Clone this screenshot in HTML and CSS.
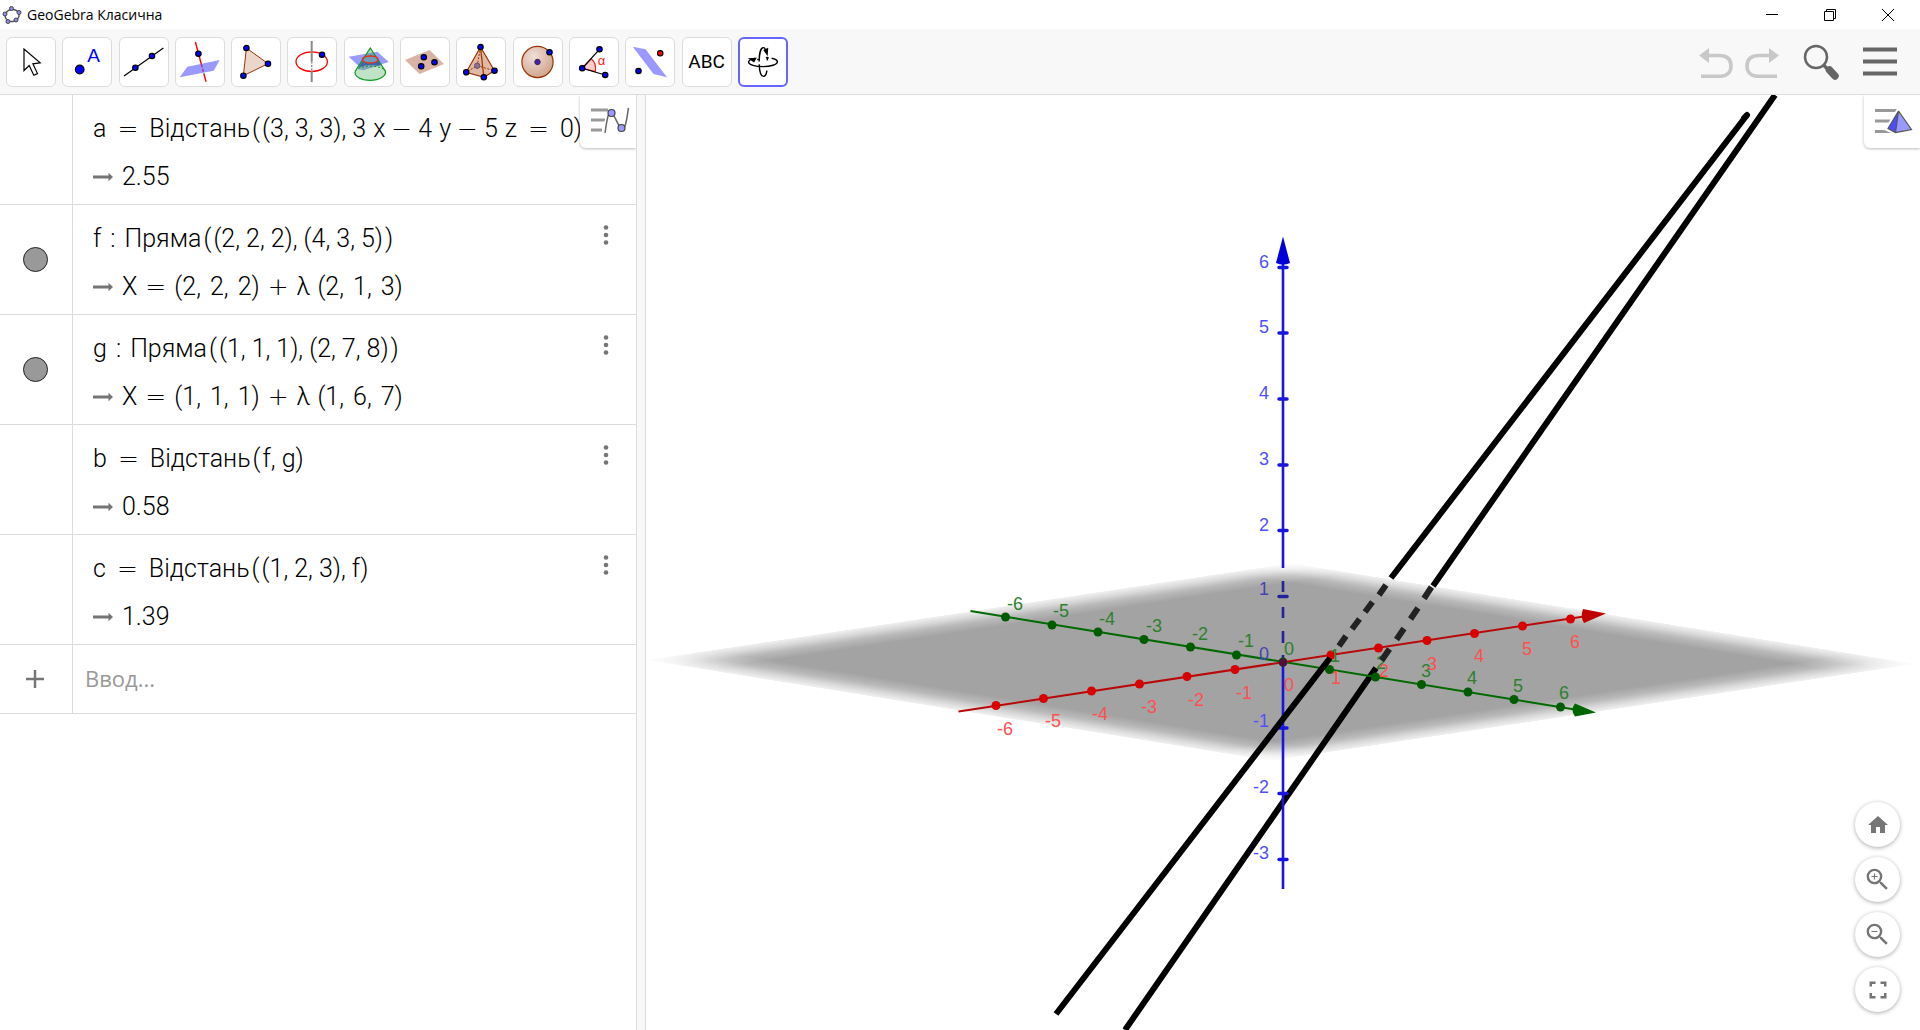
FILE: index.html
```html
<!DOCTYPE html>
<html lang="uk">
<head>
<meta charset="utf-8">
<title>GeoGebra Класична</title>
<link rel="stylesheet" href="styles.css">
</head>
<body>
<div class="app">
  <header class="titlebar">
    <svg class="logo" viewBox="0 0 20 20" width="20" height="20" aria-hidden="true">
      <ellipse cx="10" cy="10.500" rx="7" ry="6" fill="none" stroke="#555" stroke-width="1.500" transform="rotate(-10 10 10)"/>
      <g fill="#8c8cf5" stroke="#444" stroke-width="1"><circle cx="9.500" cy="3.500" r="2"/><circle cx="17" cy="7.500" r="2"/><circle cx="14" cy="15" r="2"/><circle cx="6" cy="16.500" r="2"/><circle cx="3" cy="9" r="2"/></g>
    </svg>
    <h1 class="title">GeoGebra Класична</h1>
    <div class="window-controls">
      <button type="button" aria-label="Згорнути"><svg viewBox="0 0 12 12" width="12" height="12"><path d="M0 5.500h12"/></svg></button>
      <button type="button" aria-label="Відновити"><svg viewBox="0 0 12 12" width="12" height="12"><path d="M.5 2.500h9v9h-9zM2.500 2.500v-2h9v9h-2"/></svg></button>
      <button type="button" aria-label="Закрити"><svg viewBox="0 0 12 12" width="12" height="12"><path d="M0 0l12 12M12 0L0 12"/></svg></button>
    </div>
  </header>

  <nav class="toolbar">
    <div class="tools">
      <button class="tool" type="button" aria-label="Переміщення"><svg viewBox="1 1 48 48"><path d="M18 12v21.500l5.200-5 4.600 9.800 3.700-1.700-4.600-9.800 7.300-1z" fill="#fff" stroke="#000" stroke-width="1.200"/></svg></button>
      <button class="tool" type="button" aria-label="Точка"><svg viewBox="1 1 48 48"><circle class="pt" cx="17.700" cy="32.500" r="4.300"/><text x="31.500" y="25" font-size="19" text-anchor="middle" fill="#00f">A</text></svg></button>
      <button class="tool" type="button" aria-label="Пряма"><svg viewBox="1 1 48 48"><path d="M5 39L44.400 11" stroke="#000" stroke-width="1.200"/><circle class="pt" cx="16.400" cy="30.700" r="2.700"/><circle class="pt" cx="33" cy="19" r="2.700"/></svg></button>
      <button class="tool" type="button" aria-label="Перпендикулярна пряма"><svg viewBox="1 1 48 48"><path d="M4.700 40.300l7.700-10.600L44.700 23l-6 10.700z" fill="#9999ff"/><path d="M20.400 5l6 22.500M29 37l2 7.700" stroke="#f00" stroke-width="1.400"/><path d="M26.400 27.500L29 37" stroke="#a03090" stroke-width="1.400" stroke-dasharray="3 1.500"/><circle class="pt" cx="23.400" cy="16.700" r="2.700"/></svg></button>
      <button class="tool" type="button" aria-label="Многокутник"><svg viewBox="1 1 48 48"><path d="M15.400 11L37 26.700 12.400 38.700z" fill="#ebd6cc" stroke="#993300" stroke-width="1"/><circle class="pt" cx="15.400" cy="11" r="2.700"/><circle class="pt" cx="37" cy="26.700" r="2.700"/><circle class="pt" cx="12.400" cy="38.700" r="2.700"/></svg></button>
      <button class="tool" type="button" aria-label="Коло з віссю"><svg viewBox="1 1 48 48"><ellipse cx="24.700" cy="24.700" rx="15.700" ry="9.800" fill="none" stroke="#f00" stroke-width="1.300"/><path d="M24.700 4v20.500M24.700 34v11" stroke="#888" stroke-width="2"/><path d="M24.700 24.500v9" stroke="#888" stroke-width="1.400" stroke-dasharray="2 1.500"/><circle class="pt" cx="35" cy="17.700" r="2.700"/></svg></button>
      <button class="tool" type="button" aria-label="Перетин поверхонь"><svg viewBox="1 1 48 48"><path d="M4.700 19.700l28.700-5L44.700 25 19 33z" fill="#9999ff"/><path d="M26.300 11l15 23c1.500 5-6 9.300-15 9.300S9.500 39.500 11.300 34z" fill="#3c9c55" fill-opacity=".4"/><path d="M18.500 24.500l-5 7.500 5.500 1.200L37.500 28l-3-4.500c-3 3.500-13 3.500-16 1z" fill="#2c50a8" fill-opacity=".75"/><ellipse cx="26.300" cy="35.500" rx="15.500" ry="7.600" fill="#d8f0d8" fill-opacity=".45"/><path d="M26.300 11l15 23c1.500 5-6 9.300-15 9.300S9.500 39.500 11.300 34z" fill="none" stroke="#0a9a1a" stroke-width="1.200"/><path d="M11.300 34c4-6.500 26-6.500 30 0" fill="none" stroke="#0a9a1a" stroke-dasharray="2 2"/><ellipse cx="26.300" cy="22.500" rx="8" ry="3.500" fill="none" stroke="#e33010" stroke-width="1.300"/></svg></button>
      <button class="tool" type="button" aria-label="Площина через три точки"><svg viewBox="1 1 48 48"><path d="M5 23l24.500-10L44 27 19.500 37z" fill="#d9b3a3"/><circle class="pt" cx="23.800" cy="20.300" r="2.700"/><circle class="pt" cx="21.200" cy="29.300" r="2.700"/><circle class="pt" cx="34.500" cy="25.300" r="2.700"/></svg></button>
      <button class="tool" type="button" aria-label="Піраміда"><svg viewBox="1 1 48 48"><path d="M24.500 10L10.200 35.300l17.600 5 10.700-6.600z" fill="#d9a68c" fill-opacity=".8"/><path d="M24.500 10L10.200 35.300l17.600 5L24.500 10l14 23.700-10.700 6.600" fill="none" stroke="#993300" stroke-width="1.200"/><path d="M24.500 10l-3.300 18.700-11 6.600M21.200 28.700l17.300 5" fill="none" stroke="#993300" stroke-dasharray="2 1.500"/><circle cx="21.200" cy="28.700" r="2.700" fill="#8c7090" stroke="#6a5070"/><circle class="pt" cx="24.500" cy="10" r="2.700"/><circle class="pt" cx="10.200" cy="35.300" r="2.700"/><circle class="pt" cx="27.800" cy="40.300" r="2.700"/><circle class="pt" cx="38.500" cy="33.700" r="2.700"/></svg></button>
      <button class="tool" type="button" aria-label="Сфера"><svg viewBox="1 1 48 48"><defs><radialGradient id="ball" cx=".38" cy=".32" r=".7"><stop offset="0" stop-color="#efdfd8"/><stop offset="1" stop-color="#d2a48e"/></radialGradient></defs><circle cx="24.500" cy="25" r="15.600" fill="url(#ball)" stroke="#993300" stroke-width="1.200"/><circle cx="24.500" cy="25" r="2.700" fill="#4020b0" stroke="#402050"/><circle class="pt" cx="36.500" cy="15.300" r="2.700"/></svg></button>
      <button class="tool" type="button" aria-label="Кут"><svg viewBox="1 1 48 48"><path d="M13.200 31.300l9-9.500c3 2.500 5 7.500 4.200 12.700z" fill="#fcc" stroke="#e22" stroke-width="1.200"/><path d="M30.500 12.300L13.200 31.300l23 6.700" fill="none" stroke="#000" stroke-width="1.200"/><text x="32.500" y="28" font-size="13" text-anchor="middle" fill="#f22">α</text><circle class="pt" cx="13.200" cy="31.300" r="2.700"/><circle class="pt" cx="30.500" cy="12.300" r="2.700"/><circle class="pt" cx="36.200" cy="38" r="2.700"/></svg></button>
      <button class="tool" type="button" aria-label="Симетрія відносно площини"><svg viewBox="1 1 48 48"><path d="M7.800 9.700l12.700 2.600L42 40.300 28.500 37z" fill="#9999ff"/><circle class="pt" cx="13.500" cy="34" r="2.700"/><circle cx="35.200" cy="16.300" r="2.700" fill="#f00" stroke="#000" stroke-width="1.200"/></svg></button>
      <button class="tool tool-text" type="button">ABC</button>
      <button class="tool active" type="button" aria-label="Обертання 3D вигляду"><svg viewBox="1 1 48 48"><g fill="none" stroke="#000" stroke-width="1.500"><path d="M17 21c-4.500 1-7 2.300-7 4 0 3 7 4.800 15 4.800s15-2 15-5c0-1.800-2.500-3-6-3.700M31 20.800l-3-.4M19 22.500l1.500-.4"/><path d="M28.300 14.500c-.6-2.800-1.700-4.500-3-4.500-2.700 0-4.300 6.500-4.300 14.500M21 27.500c.3 7 2 12.500 4.500 12.500 1.700 0 3-2.200 3.600-6M29.300 19.500l.3 4"/></g><path d="M18.500 20.500l-9.300.7 6.500 4.300zM30.500 10l-.7 9-4.500-6.500z"/></svg></button>
    </div>
    <div class="actions">
      <button type="button" aria-label="Скасувати"><svg width="36" height="32" viewBox="0 0 36 32"><path d="M10 9.500h11c7 0 12 3 12 10.500 0 6-4 10.300-11 10.300H3" fill="none" stroke="#c8c8c8" stroke-width="3.600"/><path d="M1 9.500L11 2v15z" fill="#c8c8c8"/></svg></button>
      <button type="button" aria-label="Повторити"><svg width="36" height="32" viewBox="0 0 36 32"><path d="M26 9.500H15C8 9.500 3 12.500 3 20c0 6 4 10.300 11 10.300h19" fill="none" stroke="#c8c8c8" stroke-width="3.600"/><path d="M35 9.500L25 2v15z" fill="#c8c8c8"/></svg></button>
      <button type="button" class="search" aria-label="Пошук"><svg width="36" height="36" viewBox="0 0 36 36"><circle cx="13" cy="13" r="11" fill="none" stroke="#666" stroke-width="2.500"/><path d="M20.500 21l4 4" stroke="#666" stroke-width="3.500"/><path d="M26.500 26l5.500 6" stroke="#666" stroke-width="7.500" stroke-linecap="round"/></svg></button>
      <button type="button" class="menu" aria-label="Меню"><svg width="34" height="29" viewBox="0 0 34 29"><path d="M0 2.500h34M0 14.500h34M0 26.500h34" stroke="#666" stroke-width="4"/></svg></button>
    </div>
  </nav>

  <main class="views">
    <section class="algebra" aria-label="Алгебра">
      <button class="style-toggle" type="button" aria-label="Стиль алгебри"><svg width="36" height="30" viewBox="0 0 36 30"><path d="M0 4h17M0 14h14M0 24h11" stroke="#999" stroke-width="3"/><path d="M14 27C16 14 18 5 20.500 6S25 20 31 22 36 10 37.500 2" fill="none" stroke="#fff" stroke-width="5"/><path d="M14 27C16 14 17 4 21 7.500S26 19 30.500 22 36 10 37.500 2" fill="none" stroke="#666" stroke-width="1.500"/><g fill="#9999ff" stroke="#444" stroke-width="1.200"><circle cx="20.500" cy="7" r="3.500"/><circle cx="30.500" cy="22" r="3.500"/></g></svg></button>
      <ul class="rows">
        <li class="row">
          <span class="marble"></span>
          <div class="cell">
            <p class="def">a<i>=</i>Відстань<b>(</b>(3<u>,</u>3<u>,</u>3)<u>,</u>3<s></s>x<em>−</em>4<s></s>y<em>−</em>5<s></s>z<i>=</i>0)</p>
            <p class="out"><svg class="arrow" width="20" height="10" viewBox="0 0 20 10"><path d="M0 3.600h15.500V.8L20 5l-4.500 4.200V6.400H0z"/></svg>2.55</p>
          </div>
        </li>
        <li class="row">
          <span class="marble"><button type="button" aria-label="Показати f"></button></span>
          <div class="cell">
            <p class="def">f<var>:</var>Пряма<b>(</b>(2<u>,</u>2<u>,</u>2)<u>,</u>(4<u>,</u>3<u>,</u>5)<b>)</b></p>
            <p class="out"><svg class="arrow" width="20" height="10" viewBox="0 0 20 10"><path d="M0 3.600h15.500V.8L20 5l-4.500 4.200V6.400H0z"/></svg>X<em>=</em>(2<q>,</q>2<q>,</q>2)<em>+</em>λ<s></s>(2<q>,</q>1<q>,</q>3)</p>
          </div>
          <button class="more" type="button" aria-label="Більше"><svg width="6" height="20" viewBox="0 0 6 20"><circle cx="3" cy="2.500" r="2.300"/><circle cx="3" cy="10" r="2.300"/><circle cx="3" cy="17.500" r="2.300"/></svg></button>
        </li>
        <li class="row">
          <span class="marble"><button type="button" aria-label="Показати g"></button></span>
          <div class="cell">
            <p class="def">g<var>:</var>Пряма<b>(</b>(1<u>,</u>1<u>,</u>1)<u>,</u>(2<u>,</u>7<u>,</u>8)<b>)</b></p>
            <p class="out"><svg class="arrow" width="20" height="10" viewBox="0 0 20 10"><path d="M0 3.600h15.500V.8L20 5l-4.500 4.200V6.400H0z"/></svg>X<em>=</em>(1<q>,</q>1<q>,</q>1)<em>+</em>λ<s></s>(1<q>,</q>6<q>,</q>7)</p>
          </div>
          <button class="more" type="button" aria-label="Більше"><svg width="6" height="20" viewBox="0 0 6 20"><circle cx="3" cy="2.500" r="2.300"/><circle cx="3" cy="10" r="2.300"/><circle cx="3" cy="17.500" r="2.300"/></svg></button>
        </li>
        <li class="row">
          <span class="marble"></span>
          <div class="cell">
            <p class="def">b<i>=</i>Відстань<b>(</b>f<u>,</u>g)</p>
            <p class="out"><svg class="arrow" width="20" height="10" viewBox="0 0 20 10"><path d="M0 3.600h15.500V.8L20 5l-4.500 4.200V6.400H0z"/></svg>0.58</p>
          </div>
          <button class="more" type="button" aria-label="Більше"><svg width="6" height="20" viewBox="0 0 6 20"><circle cx="3" cy="2.500" r="2.300"/><circle cx="3" cy="10" r="2.300"/><circle cx="3" cy="17.500" r="2.300"/></svg></button>
        </li>
        <li class="row">
          <span class="marble"></span>
          <div class="cell">
            <p class="def">c<i>=</i>Відстань<b>(</b>(1<u>,</u>2<u>,</u>3)<u>,</u>f)</p>
            <p class="out"><svg class="arrow" width="20" height="10" viewBox="0 0 20 10"><path d="M0 3.600h15.500V.8L20 5l-4.500 4.200V6.400H0z"/></svg>1.39</p>
          </div>
          <button class="more" type="button" aria-label="Більше"><svg width="6" height="20" viewBox="0 0 6 20"><circle cx="3" cy="2.500" r="2.300"/><circle cx="3" cy="10" r="2.300"/><circle cx="3" cy="17.500" r="2.300"/></svg></button>
        </li>
        <li class="row entry">
          <span class="marble"><svg width="18" height="18" viewBox="0 0 18 18"><path d="M9 0v18M0 9h18" stroke="#757575" stroke-width="2.400"/></svg></span>
          <input type="text" placeholder="Ввод..." aria-label="Ввод">
        </li>
      </ul>
    </section>
    <div class="splitter"></div>
    <section class="space" aria-label="3D Полотно">
      <svg class="plot" viewBox="646 95 1274 935" preserveAspectRatio="xMidYMid slice">
        <defs>
          <linearGradient id="fadeU"><stop offset="0" stop-color="#a3a3a3" stop-opacity=".14"/><stop offset=".03" stop-color="#a3a3a3" stop-opacity=".42"/><stop offset=".06" stop-color="#a3a3a3" stop-opacity=".76"/><stop offset=".1" stop-color="#a3a3a3"/><stop offset=".9" stop-color="#a3a3a3"/><stop offset=".94" stop-color="#a3a3a3" stop-opacity=".76"/><stop offset=".97" stop-color="#a3a3a3" stop-opacity=".42"/><stop offset="1" stop-color="#a3a3a3" stop-opacity=".14"/></linearGradient>
          <linearGradient id="fadeV" x2="0" y2="1"><stop offset="0" stop-color="#fff" stop-opacity=".14"/><stop offset=".03" stop-color="#fff" stop-opacity=".42"/><stop offset=".06" stop-color="#fff" stop-opacity=".76"/><stop offset=".1" stop-color="#fff"/><stop offset=".9" stop-color="#fff"/><stop offset=".94" stop-color="#fff" stop-opacity=".76"/><stop offset=".97" stop-color="#fff" stop-opacity=".42"/><stop offset="1" stop-color="#fff" stop-opacity=".14"/></linearGradient>
          <mask id="maskV" x="0" y="0" width="1" height="1" maskContentUnits="objectBoundingBox" color-interpolation="sRGB"><rect width="1" height="1" fill="url(#fadeV)"/></mask>
        </defs>
        <g transform="matrix(6.460 -.970 6.260 1.010 645 660)"><rect width="100" height="100" fill="url(#fadeU)" mask="url(#maskV)"/></g>

        <g class="line"><path d="M1775 95L1433 586M1376 668L1125 1030"/></g>

        <g class="axis-z">
          <path d="M1283 262V568M1283 662V889" stroke-width="2.600"/>
          <path d="M1283 581v11M1283 607v11M1283 631v12M1283 655v7" class="behind" stroke-width="2.600"/>
          <path d="M1279 267.500h8M1279 333h8M1279 399h8M1279 465h8M1279 530.500h8M1279 728h8M1279 793.500h8M1279 859.500h8" stroke-width="3.500" stroke-linecap="round"/>
          <path d="M1279 596.500h8" class="behind" stroke-width="3.500" stroke-linecap="round"/>
          <path d="M1283 236.500l-7 26.500q7 3 14 0z" class="tip"/>
        </g>
        <g class="axis-y">
          <path d="M970.500 611L1578 710"/>
          <g><circle cx="1005.500" cy="617" r="4.500"/><circle cx="1052" cy="625" r="4.500"/><circle cx="1098" cy="632" r="4.500"/><circle cx="1144" cy="639.500" r="4.500"/><circle cx="1190.500" cy="647" r="4.500"/><circle cx="1236.500" cy="655" r="4.500"/><circle cx="1283" cy="662" r="4.500"/><circle cx="1329.500" cy="669.500" r="4.500"/><circle cx="1375.500" cy="677" r="4.500"/><circle cx="1421.500" cy="684.500" r="4.500"/><circle cx="1468" cy="692" r="4.500"/><circle cx="1514" cy="699.500" r="4.500"/><circle cx="1560.500" cy="707" r="4.500"/></g>
          <path d="M1596 712.500l-21-9q-5 6 0 13z" class="tip"/>
        </g>
        <g class="axis-x">
          <path d="M958.500 711.500L1584 616.500"/>
          <g><circle cx="996" cy="705.500" r="4.500"/><circle cx="1043.500" cy="698.500" r="4.500"/><circle cx="1091.500" cy="691" r="4.500"/><circle cx="1139.500" cy="684" r="4.500"/><circle cx="1187" cy="676.500" r="4.500"/><circle cx="1235" cy="669.500" r="4.500"/><circle class="origin" cx="1283" cy="662.500" r="4"/><circle cx="1331" cy="655" r="4.500"/><circle cx="1378.500" cy="648" r="4.500"/><circle cx="1427" cy="640.500" r="4.500"/><circle cx="1474.500" cy="633.500" r="4.500"/><circle cx="1522.500" cy="626" r="4.500"/><circle cx="1570.500" cy="619" r="4.500"/></g>
          <path d="M1606 613.500l-23-4.500q-3 8 1 14z" class="tip"/>
        </g>

        <g class="num num-y">
          <text x="1007" y="610">-6</text><text x="1053" y="617">-5</text><text x="1099" y="625">-4</text><text x="1146" y="632">-3</text><text x="1192" y="640">-2</text><text x="1238" y="647">-1</text><text x="1284" y="655">0</text><text x="1330" y="662">1</text><text x="1376" y="669">2</text><text x="1421" y="677">3</text><text x="1467" y="684">4</text><text x="1513" y="692">5</text><text x="1559" y="699">6</text>
        </g>
        <g class="line">
          <path d="M1747 115l-3 3" stroke-linecap="round"/>
          <path d="M1747 115L1391 578M1330 658L1056 1014"/>
          <path class="hidden-part" d="M1386 585l-7 10M1372.500 602l-7.500 10M1359.500 619l-7.500 10M1346 636l-7 10M1431.500 587l-7.500 11.500M1418 608l-7.500 11M1404 628.500l-7.500 11M1389.500 649l-8 11.500"/>
        </g>
        <g class="num num-x">
          <text x="997" y="735">-6</text><text x="1045" y="727">-5</text><text x="1092" y="720">-4</text><text x="1141" y="713">-3</text><text x="1188" y="706">-2</text><text x="1236" y="699">-1</text><text x="1284" y="691">0</text><text x="1331" y="684">1</text><text x="1379" y="677">2</text><text x="1427" y="670">3</text><text x="1474" y="662">4</text><text x="1522" y="655">5</text><text x="1570" y="648">6</text>
        </g>
        <g class="num num-z">
          <text x="1269" y="268">6</text><text x="1269" y="333">5</text><text x="1269" y="399">4</text><text x="1269" y="465">3</text><text x="1269" y="531">2</text><text class="dim" x="1269" y="595">1</text><text class="dim" x="1269" y="660">0</text><text x="1269" y="727">-1</text><text x="1269" y="793">-2</text><text x="1269" y="859">-3</text>
        </g>
      </svg>
      <button class="style-toggle" type="button" aria-label="Стиль полотна"><svg width="36" height="30" viewBox="0 0 36 30"><path d="M0 4.500h22M0 15h19M0 25.500h16" stroke="#999" stroke-width="3"/><path d="M23.500 4L12 23l9 4 16-3z" fill="#9999ff" stroke="#fff" stroke-width="4"/><path d="M23.500 5l13 18.500L20.500 26.500z" fill="#9999ff"/><path d="M23.500 5L13 22.500l7.500 4z" fill="#4d4dff"/><path d="M23.500 5l13 18.500-16 3-7.500-4L23.500 5l-3 21.500" fill="none" stroke="#555" stroke-width="1.200"/></svg></button>
      <div class="fabs">
        <button type="button" aria-label="Стандартний вигляд"><svg viewBox="0 0 24 24"><path d="M10 20v-6h4v6h5v-8h3L12 3 2 12h3v8z"/></svg></button>
        <button type="button" class="lens" aria-label="Збільшити"><svg viewBox="0 0 24 24"><path d="M15.500 14h-.79l-.28-.27A6.470 6.470 0 0 0 16 9.500 6.500 6.500 0 1 0 9.500 16c1.610 0 3.090-.59 4.230-1.570l.27.28v.79l5 4.990L20.490 19zm-6 0C7.010 14 5 11.990 5 9.500S7.010 5 9.500 5 14 7.010 14 9.500 11.990 14 9.500 14zM12 10h-2v2H9v-2H7V9h2V7h1v2h2z"/></svg></button>
        <button type="button" class="lens" aria-label="Зменшити"><svg viewBox="0 0 24 24"><path d="M15.500 14h-.79l-.28-.27A6.470 6.470 0 0 0 16 9.500 6.500 6.500 0 1 0 9.500 16c1.610 0 3.090-.59 4.230-1.570l.27.28v.79l5 4.990L20.490 19zm-6 0C7.010 14 5 11.990 5 9.500S7.010 5 9.500 5 14 7.010 14 9.500 11.990 14 9.500 14zM7 9h5v1H7z"/></svg></button>
        <button type="button" aria-label="На весь екран"><svg viewBox="0 0 24 24"><path d="M3.500 8.500v-5h6v2.500H6v2.500zM3.500 15v5.500h6V18H6v-3zM20.500 8.500v-5h-6v2.500H18v2.500zM20.500 15v5.500h-6V18H18v-3z"/></svg></button>
      </div>
    </section>
  </main>
</div>
</body>
</html>
```
FILE: styles.css
```css
* { box-sizing: border-box; }
body { margin: 0; font-family: Roboto, "Liberation Sans", sans-serif; background: #fff; color: #000; }
button { margin: 0; padding: 0; border: 0; background: none; font: inherit; color: inherit; }
p, h1, ul { margin: 0; padding: 0; }
svg { display: block; flex: none; }

.app { display: flex; flex-direction: column; height: 100vh; overflow: hidden; }

.titlebar { display: flex; align-items: center; height: 29px; padding: 0 3px 0 2px; flex: none; }
.logo { width: 20px; height: 20px; }
.title { margin-left: 5px; font: 400 14px/20px "Open Sans", sans-serif; }
.window-controls { display: flex; margin-left: auto; }
.window-controls button { display: grid; place-items: center; width: 58px; height: 28px; }
.window-controls path { fill: none; stroke: #000; }

.toolbar { display: flex; align-items: center; justify-content: space-between; height: 66px; flex: none; padding: 0 23px 0 6px; background: #f8f8f8; border-bottom: 1px solid #dcdcdc; }
.tools { display: flex; justify-content: space-between; width: 782px; }
.tool { display: grid; place-items: center; width: 50px; height: 50px; border: 1px solid #dcdcdc; border-radius: 6px; background: #fff; overflow: hidden; }
.tool svg { width: 48px; height: 48px; font-family: "Liberation Sans", sans-serif; }
.tool.active { border: 2px solid #6666ff; }
.tool.active svg { width: 46px; height: 46px; }
.tool-text { font-size: 19px; }
.pt { fill: #00f; stroke: #000; stroke-width: 1.2px; }
.actions { display: flex; align-items: center; gap: 10px; }
.actions .search { margin-left: 13px; }
.actions .menu { margin-left: 14px; }

.views { display: flex; flex: 1; min-height: 0; }
.algebra { position: relative; width: 33.125%; flex: none; }
.style-toggle { position: absolute; top: 0; right: 0; display: grid; justify-content: end; align-content: center; width: 56px; height: 53px; padding: 0 9px 2px 0; background: #fff; border-radius: 0 0 0 6px; box-shadow: 0 1px 3px #0004; clip-path: inset(0 0 -4px -4px); }
.style-toggle svg { overflow: visible; }
.rows { list-style: none; }
.row { display: flex; height: 110px; border-bottom: 1px solid #dcdcdc; }
.marble { display: grid; place-items: center; width: 73px; flex: none; border-right: 1px solid #dcdcdc; }
.marble button { width: 25px; height: 25px; margin-right: 2px; border: 1px solid #222; border-radius: 50%; background: #999; }
.cell { flex: 1; min-width: 0; padding: 17px 0 0 20px; white-space: nowrap; font-size: 25px; font-weight: 300; }
.def { display: flex; height: 48px; line-height: 34px; }
.out { display: flex; align-items: center; height: 34px; line-height: 34px; }
.arrow { margin-right: 9px; fill: #757575; }
.cell i, .cell b, .cell u, .cell em, .cell s, .cell var, .cell q { font-style: normal; font-weight: inherit; text-decoration: none; quotes: none; }
.cell q::before, .cell q::after { content: none; }
.cell i, .cell em { font-family: "DejaVu Sans", sans-serif; font-weight: 200; }
.cell i { margin: 0 11px; }
.def em { margin: 0 6px; }
.out em { margin: 0 8px; }
.cell u { margin-right: 6px; }
.cell q { margin-right: 9px; }
.cell s { width: 7px; }
.cell var { margin: 0 9px; }
.cell b { margin: 0 2px; }
.more { align-self: flex-start; width: 6px; margin: 20px 27px 0 0; fill: #757575; }
.entry { height: 69px; }
.entry .marble svg { margin-right: 2px; }
.entry input { flex: 1; min-width: 0; border: 0; outline: 0; padding: 0 12px 2px; font: 22px "Open Sans", sans-serif; }
.entry input::placeholder { color: #999; opacity: 1; }

.splitter { width: 10px; flex: none; background: #f8f8f8; border: solid #dcdcdc; border-width: 0 1px; }
.space { position: relative; flex: 1; min-width: 0; }
.plot { width: 100%; height: 100%; }
.line path { fill: none; stroke: #000; stroke-width: 6px; }
.line .hidden-part { stroke: #222; stroke-width: 6px; }
.axis-z path { stroke: #1616e0; }
.axis-z .behind { stroke: #22229a; }
.axis-z .tip { fill: #0000d8; stroke: none; }
.axis-x > path { stroke: #b80808; stroke-width: 2px; }
.axis-x circle { fill: #d80000; }
.axis-x .origin { fill: #501040; }
.axis-x .tip { fill: #c00000; stroke: none; }
.axis-y > path { stroke: #006a00; stroke-width: 2px; }
.axis-y circle { fill: #005c00; }
.axis-y .tip { fill: #006400; stroke: none; }
.num { font: 18px "Liberation Sans", sans-serif; }
.num-x { fill: #ff5050; }
.num-y { fill: #2e802e; }
.num-z { fill: #5050ff; text-anchor: end; }
.num-z .dim { fill: #4343b5; }

.fabs { position: absolute; right: 20px; bottom: 18px; display: flex; flex-direction: column; gap: 10px; }
.fabs button { display: grid; place-items: center; width: 45px; height: 45px; border-radius: 50%; background: #fff; box-shadow: 0 1px 4px #0005; }
.fabs svg { width: 24px; height: 24px; fill: #757575; }
.fabs .lens svg { width: 29px; height: 29px; }
```
